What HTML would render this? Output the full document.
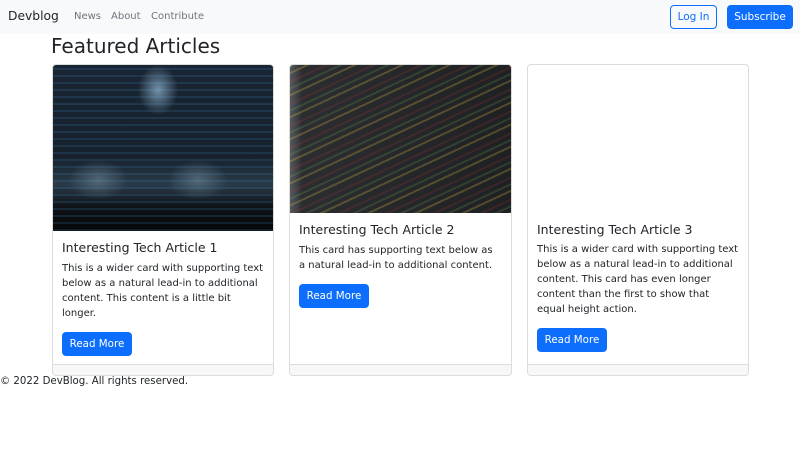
<!DOCTYPE html>
<html><head><meta charset="utf-8"><style>
*{box-sizing:border-box;margin:0;padding:0}
body{width:800px;height:450px;background:#fff;font-family:"DejaVu Sans","Liberation Sans",sans-serif;color:#212529;position:relative;overflow:hidden}
.nav{position:absolute;left:0;top:0;width:800px;height:34px;background:#f8f9fa}
.a{position:absolute}
.brand{left:8px;top:9px;font-size:12.3px;color:#212529}
.link{top:11px;font-size:10px;color:#6c757d}
.btn{position:absolute;border-radius:4px;font-size:10.5px;text-align:center;line-height:22px}
.card{position:absolute;top:64px;height:312px;border:1px solid #dcdcdc;border-radius:4px;overflow:hidden;background:#fff}
.foot{position:absolute;left:0;right:0;bottom:0;height:11px;background:#f7f7f7;border-top:1px solid #dcdcdc}
.t{position:absolute;left:9px;font-size:12.5px;color:#212529}
.p{position:absolute;left:9px;font-size:10px;line-height:15px;color:#212529;white-space:nowrap}
.rb{position:absolute;left:9px;width:70px;height:24px;background:#0d6efd;color:#fff;border-radius:4px;font-size:10.3px;line-height:24px;text-align:center}
</style></head><body>
<div class="nav">
<div class="a brand">Devblog</div>
<div class="a link" style="left:74px">News</div>
<div class="a link" style="left:111px">About</div>
<div class="a link" style="left:151px">Contribute</div>
<div class="btn" style="left:670px;top:5px;width:47px;height:24px;border:1px solid #0d6efd;color:#0d6efd">Log In</div>
<div class="btn" style="left:727px;top:5px;width:66px;height:24px;background:#0d6efd;color:#fff;line-height:24px">Subscribe</div>
</div>
<div class="a" style="left:51px;top:34px;font-size:20px">Featured Articles</div>

<div class="card" style="left:52px;width:222px">
<div style="position:absolute;left:0;top:0;width:222px;height:166px;background:
radial-gradient(ellipse 30px 20px at 45px 115px,rgba(120,150,170,.5),transparent),
radial-gradient(ellipse 30px 20px at 145px 115px,rgba(120,150,170,.5),transparent),
radial-gradient(ellipse 20px 25px at 105px 25px,rgba(150,190,220,.7),transparent),
repeating-linear-gradient(0deg,rgba(60,140,200,.18) 0 2px,transparent 2px 7px),
linear-gradient(180deg,#1a2533 0%,#16212c 55%,#2a3a48 72%,#101418 85%,#050607 100%)"></div>
<div class="t" style="top:175px">Interesting Tech Article 1</div>
<div class="p" style="top:196px">This is a wider card with supporting text<br>below as a natural lead-in to additional<br>content. This content is a little bit<br>longer.</div>
<div class="rb" style="top:267px">Read More</div>
<div class="foot"></div>
</div>

<div class="card" style="left:289px;width:223px">
<div style="position:absolute;left:0;top:0;width:223px;height:148px;background:
repeating-linear-gradient(-25deg,rgba(230,200,60,.25) 0 2px,transparent 2px 6px,rgba(120,200,80,.18) 6px 8px,transparent 8px 12px,rgba(220,60,60,.15) 12px 14px,transparent 14px 20px),
linear-gradient(90deg,#55595e 0,#2b2d31 12px,#1e2023 100%)"></div>
<div class="t" style="top:157px">Interesting Tech Article 2</div>
<div class="p" style="top:178px">This card has supporting text below as<br>a natural lead-in to additional content.</div>
<div class="rb" style="top:219px">Read More</div>
<div class="foot"></div>
</div>

<div class="card" style="left:527px;width:222px">
<div class="t" style="top:157px">Interesting Tech Article 3</div>
<div class="p" style="top:177px">This is a wider card with supporting text<br>below as a natural lead-in to additional<br>content. This card has even longer<br>content than the first to show that<br>equal height action.</div>
<div class="rb" style="top:263px">Read More</div>
<div class="foot"></div>
</div>

<div class="a" style="left:0;top:376px;font-size:10.2px">© 2022 DevBlog. All rights reserved.</div>
</body></html>
